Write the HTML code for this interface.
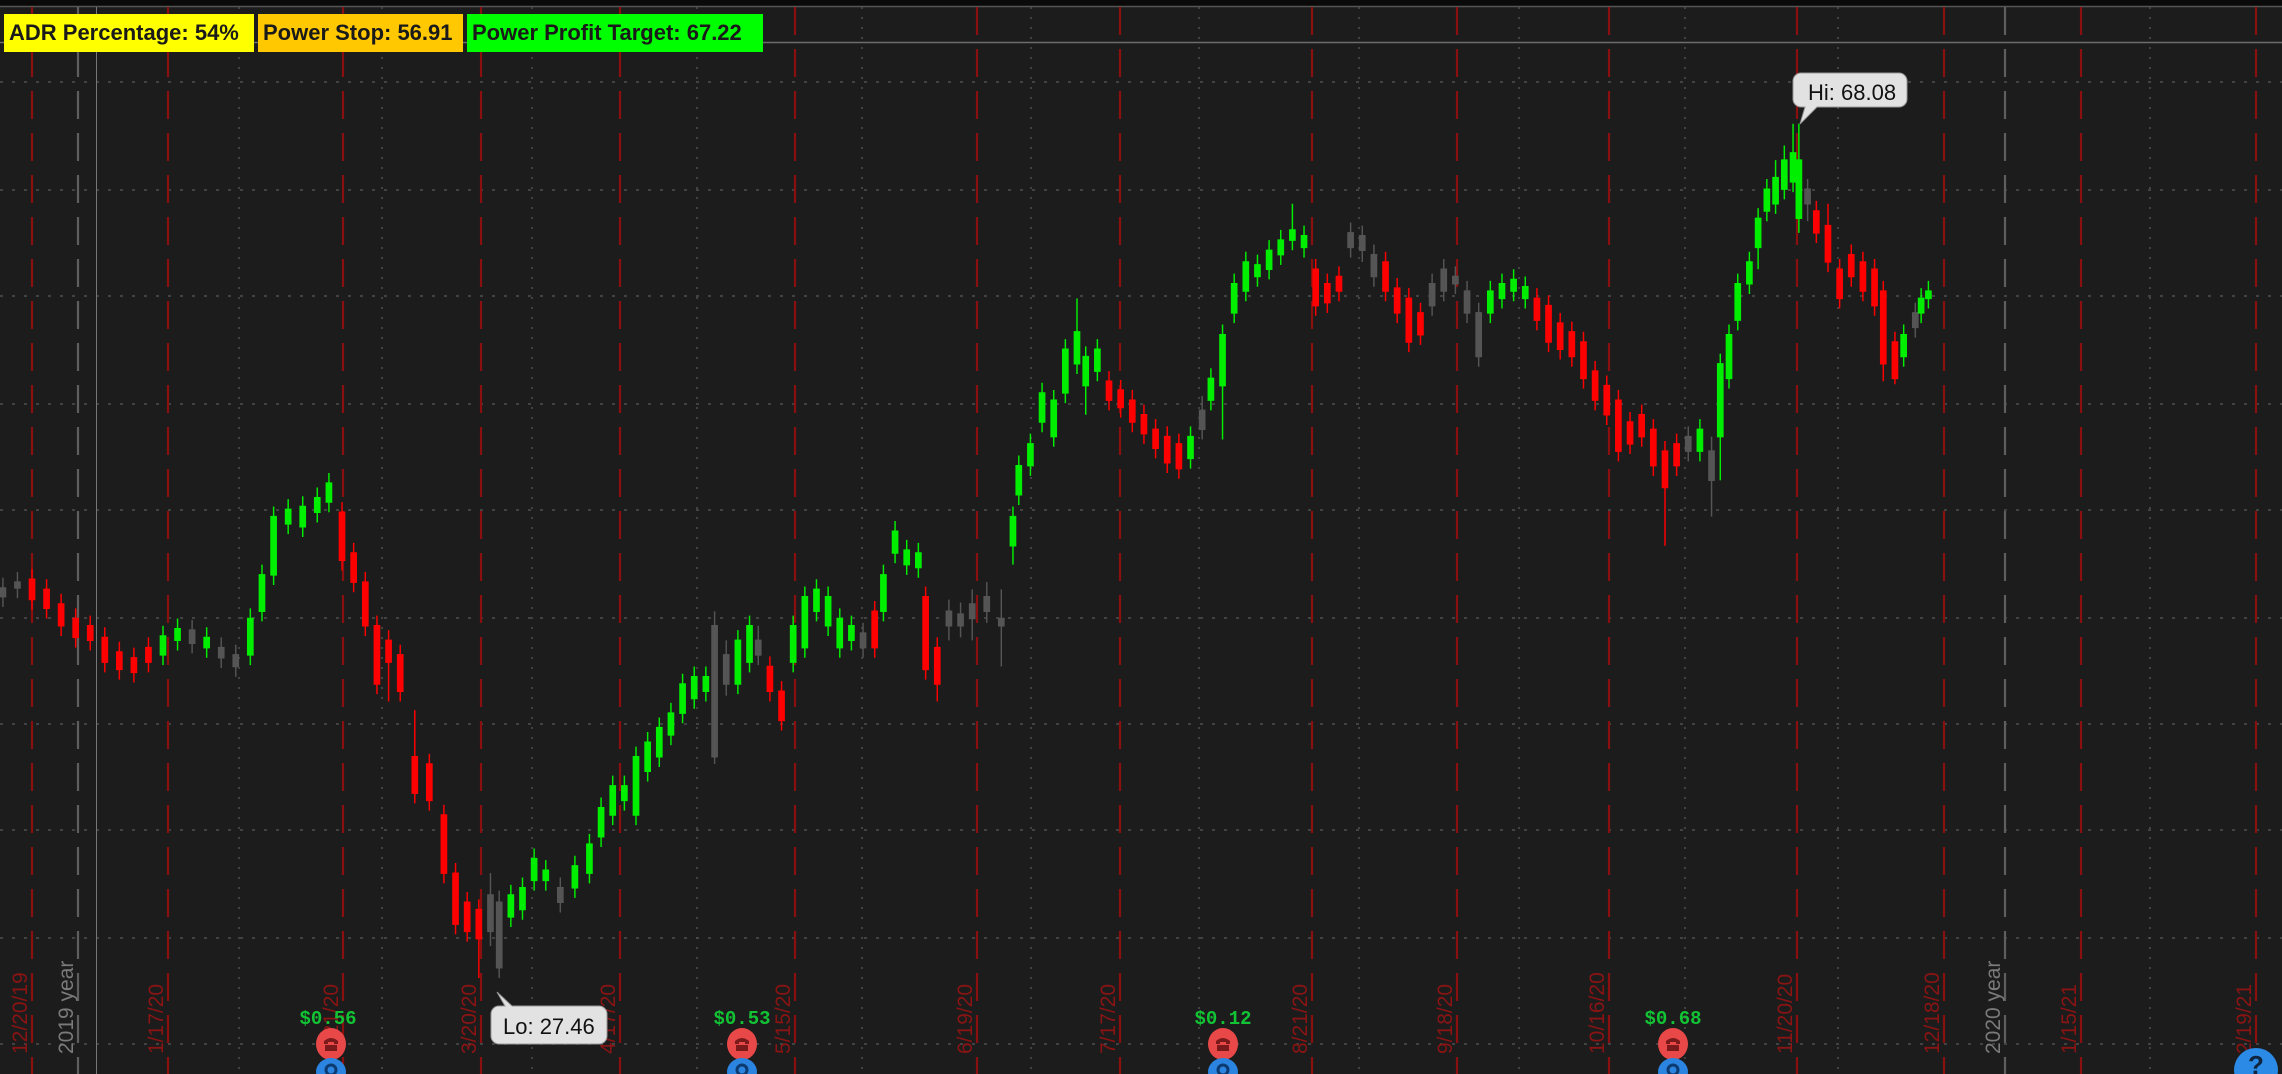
<!DOCTYPE html>
<html><head><meta charset="utf-8">
<style>
html,body{margin:0;padding:0;background:#1c1c1c;width:2282px;height:1074px;overflow:hidden;}
.box{position:absolute;top:14px;height:38px;font-family:"Liberation Sans",sans-serif;font-weight:bold;font-size:22px;line-height:38px;color:#1a1a1a;padding-left:5px;box-sizing:border-box;white-space:nowrap;}
svg{position:absolute;left:0;top:0;}
</style></head><body>
<svg width="2282" height="1074" viewBox="0 0 2282 1074" xmlns="http://www.w3.org/2000/svg">
<rect width="2282" height="1074" fill="#1c1c1c"/>
<rect width="2282" height="6" fill="#0a0a0a"/>
<line x1="0" y1="6.5" x2="2282" y2="6.5" stroke="#555" stroke-width="1.5"/>
<line x1="0" y1="42.5" x2="2282" y2="42.5" stroke="#6c6c6c" stroke-width="1.5"/>
<!-- horizontal dotted grid -->
<g stroke="#4e4e4e" stroke-width="1.5" stroke-dasharray="3 9">
<line x1="0" y1="82" x2="2282" y2="82"/><line x1="0" y1="190" x2="2282" y2="190"/>
<line x1="0" y1="296" x2="2282" y2="296"/><line x1="0" y1="404" x2="2282" y2="404"/>
<line x1="0" y1="510" x2="2282" y2="510"/><line x1="0" y1="618" x2="2282" y2="618"/>
<line x1="0" y1="724" x2="2282" y2="724"/><line x1="0" y1="830" x2="2282" y2="830"/>
<line x1="0" y1="938" x2="2282" y2="938"/><line x1="0" y1="1044" x2="2282" y2="1044"/>
</g>
<!-- vertical dotted grid -->
<g stroke="#4e4e4e" stroke-width="1.5" stroke-dasharray="2 8">
<line x1="239" y1="7" x2="239" y2="1074"/><line x1="382" y1="7" x2="382" y2="1074"/>
<line x1="532" y1="7" x2="532" y2="1074"/><line x1="697" y1="7" x2="697" y2="1074"/>
<line x1="862" y1="7" x2="862" y2="1074"/><line x1="1031" y1="7" x2="1031" y2="1074"/>
<line x1="1199" y1="7" x2="1199" y2="1074"/><line x1="1359" y1="7" x2="1359" y2="1074"/>
<line x1="1519" y1="7" x2="1519" y2="1074"/><line x1="1685" y1="7" x2="1685" y2="1074"/>
<line x1="1838" y1="7" x2="1838" y2="1074"/><line x1="2150" y1="7" x2="2150" y2="1074"/>
</g>
<line x1="96.5" y1="7" x2="96.5" y2="1074" stroke="#777" stroke-width="1"/>
<!-- red dashed date lines -->
<g stroke="#8a1010" stroke-width="2.2" stroke-dasharray="28 14">
<line x1="32" y1="7" x2="32" y2="1074"/><line x1="168" y1="7" x2="168" y2="1074"/>
<line x1="343" y1="7" x2="343" y2="1074"/><line x1="481" y1="7" x2="481" y2="1074"/>
<line x1="620" y1="7" x2="620" y2="1074"/><line x1="795" y1="7" x2="795" y2="1074"/>
<line x1="977" y1="7" x2="977" y2="1074"/><line x1="1120" y1="7" x2="1120" y2="1074"/>
<line x1="1312" y1="7" x2="1312" y2="1074"/><line x1="1457" y1="7" x2="1457" y2="1074"/>
<line x1="1609" y1="7" x2="1609" y2="1074"/><line x1="1797" y1="7" x2="1797" y2="1074"/>
<line x1="1944" y1="7" x2="1944" y2="1074"/><line x1="2081" y1="7" x2="2081" y2="1074"/>
<line x1="2256" y1="7" x2="2256" y2="1074"/>
</g>
<g stroke="#5e5e5e" stroke-width="2.2" stroke-dasharray="28 14">
<line x1="78" y1="7" x2="78" y2="1074"/><line x1="2005" y1="7" x2="2005" y2="1074"/>
</g>
<!-- candles -->
<g transform="scale(1.4554,1.4553)" stroke-width="1">
<path fill="#555" stroke="#555" d="M0.2 404h3.6V410h-3.6zM2 397V417M10.2 400h3.6V404h-3.6zM12 393V411M130.2 433h3.6V442h-3.6zM132 426V449M150.2 445h3.6V452h-3.6zM152 438V459M160.2 450h3.6V458h-3.6zM162 443V465M335.2 615h3.6V640h-3.6zM337 600V650M341.2 620h3.6V665h-3.6zM343 612V672M383.2 610h3.6V620h-3.6zM385 603V627M489.2 430h3.6V520h-3.6zM491 420V525M497.2 450h3.6V470h-3.6zM499 440V478M519.2 440h3.6V450h-3.6zM521 430V457M591.2 435h3.6V445h-3.6zM593 428V452M650.2 420h3.6V430h-3.6zM652 412V440M658.2 422h3.6V430h-3.6zM660 414V438M666.2 415h3.6V425h-3.6zM668 405V440M676.2 410h3.6V420h-3.6zM678 400V428M686.2 425h3.6V430h-3.6zM688 405V458M824.2 282h3.6V295h-3.6zM826 272V302M926.2 160h3.6V170h-3.6zM928 153V177M934.2 162h3.6V172h-3.6zM936 155V180M942.2 175h3.6V190h-3.6zM944 168V197M982.2 195h3.6V210h-3.6zM984 188V217M990.2 185h3.6V200h-3.6zM992 178V207M998.2 190h3.6V195h-3.6zM1000 183V202M1006.2 200h3.6V215h-3.6zM1008 193V222M1014.2 215h3.6V245h-3.6zM1016 208V252M1158.2 300h3.6V310h-3.6zM1160 293V317M1174.2 310h3.6V330h-3.6zM1176 300V355M1240.2 130h3.6V140h-3.6zM1242 123V152M1314.2 215h3.6V225h-3.6zM1316 208V232"/>
<path fill="#ff0000" stroke="#ff0000" d="M20.2 398h3.6V412h-3.6zM22 391V419M30.2 405h3.6V418h-3.6zM32 398V425M40.2 415h3.6V430h-3.6zM42 408V437M50.2 425h3.6V438h-3.6zM52 418V445M60.2 430h3.6V440h-3.6zM62 423V447M70.2 438h3.6V455h-3.6zM72 431V462M80.2 448h3.6V460h-3.6zM82 441V467M90.2 452h3.6V462h-3.6zM92 445V469M100.2 445h3.6V455h-3.6zM102 438V462M233.2 352h3.6V385h-3.6zM235 345V392M241.2 380h3.6V400h-3.6zM243 373V407M249.2 400h3.6V430h-3.6zM251 393V437M257.2 430h3.6V470h-3.6zM259 423V477M265.2 440h3.6V455h-3.6zM267 433V482M273.2 450h3.6V475h-3.6zM275 443V482M283.2 520h3.6V545h-3.6zM285 488V552M293.2 525h3.6V550h-3.6zM295 518V557M303.2 560h3.6V600h-3.6zM305 553V607M311.2 600h3.6V635h-3.6zM313 593V642M319.2 620h3.6V640h-3.6zM321 613V647M327.2 625h3.6V645h-3.6zM329 618V672M527.2 458h3.6V475h-3.6zM529 451V482M535.2 475h3.6V495h-3.6zM537 468V502M599.2 420h3.6V445h-3.6zM601 413V452M634.2 410h3.6V460h-3.6zM636 403V467M642.2 445h3.6V470h-3.6zM644 438V482M760.2 262h3.6V275h-3.6zM762 255V282M768.2 268h3.6V280h-3.6zM770 261V287M776.2 275h3.6V290h-3.6zM778 268V297M784.2 285h3.6V298h-3.6zM786 278V305M792.2 295h3.6V308h-3.6zM794 288V315M800.2 300h3.6V318h-3.6zM802 293V325M808.2 305h3.6V322h-3.6zM810 298V329M902.2 185h3.6V210h-3.6zM904 178V217M910.2 195h3.6V208h-3.6zM912 188V215M918.2 190h3.6V200h-3.6zM920 183V207M950.2 180h3.6V200h-3.6zM952 173V207M958.2 198h3.6V215h-3.6zM960 191V222M966.2 205h3.6V235h-3.6zM968 198V242M974.2 215h3.6V230h-3.6zM976 208V237M1054.2 205h3.6V220h-3.6zM1056 198V227M1062.2 210h3.6V235h-3.6zM1064 203V242M1070.2 222h3.6V240h-3.6zM1072 215V247M1078.2 228h3.6V245h-3.6zM1080 221V252M1086.2 235h3.6V260h-3.6zM1088 228V267M1094.2 255h3.6V275h-3.6zM1096 248V282M1102.2 265h3.6V285h-3.6zM1104 258V292M1110.2 275h3.6V310h-3.6zM1112 268V317M1118.2 290h3.6V305h-3.6zM1120 283V312M1126.2 285h3.6V300h-3.6zM1128 278V307M1134.2 295h3.6V320h-3.6zM1136 288V327M1142.2 310h3.6V335h-3.6zM1144 303V375M1150.2 305h3.6V320h-3.6zM1152 298V327M1246.2 145h3.6V160h-3.6zM1248 138V167M1254.2 155h3.6V180h-3.6zM1256 140V187M1262.2 185h3.6V205h-3.6zM1264 178V212M1270.2 175h3.6V190h-3.6zM1272 168V197M1278.2 180h3.6V200h-3.6zM1280 173V207M1286.2 185h3.6V210h-3.6zM1288 178V217M1292.2 200h3.6V250h-3.6zM1294 193V262M1300.2 235h3.6V260h-3.6zM1302 228V264"/>
<path fill="#00ee00" stroke="#00ee00" d="M110.2 437h3.6V450h-3.6zM112 430V457M120.2 432h3.6V440h-3.6zM122 425V447M140.2 438h3.6V445h-3.6zM142 431V452M170.2 425h3.6V450h-3.6zM172 418V457M178.2 395h3.6V420h-3.6zM180 388V427M186.2 355h3.6V395h-3.6zM188 348V402M196.2 350h3.6V360h-3.6zM198 343V367M206.2 348h3.6V362h-3.6zM208 341V369M216.2 342h3.6V352h-3.6zM218 335V359M224.2 332h3.6V345h-3.6zM226 325V352M349.2 615h3.6V630h-3.6zM351 608V637M357.2 610h3.6V625h-3.6zM359 603V632M365.2 590h3.6V605h-3.6zM367 583V612M373.2 598h3.6V605h-3.6zM375 591V612M393.2 595h3.6V610h-3.6zM395 588V617M403.2 580h3.6V600h-3.6zM405 573V607M411.2 555h3.6V575h-3.6zM413 548V582M419.2 540h3.6V560h-3.6zM421 533V567M427.2 540h3.6V550h-3.6zM429 533V557M435.2 520h3.6V560h-3.6zM437 513V567M443.2 510h3.6V530h-3.6zM445 503V537M451.2 500h3.6V520h-3.6zM453 493V527M459.2 490h3.6V505h-3.6zM461 483V512M467.2 470h3.6V490h-3.6zM469 463V497M475.2 465h3.6V480h-3.6zM477 458V487M483.2 465h3.6V475h-3.6zM485 458V482M505.2 440h3.6V470h-3.6zM507 433V477M513.2 430h3.6V455h-3.6zM515 423V462M543.2 430h3.6V455h-3.6zM545 423V462M551.2 410h3.6V445h-3.6zM553 403V452M559.2 405h3.6V420h-3.6zM561 398V427M567.2 410h3.6V430h-3.6zM569 403V437M575.2 425h3.6V445h-3.6zM577 418V452M583.2 430h3.6V440h-3.6zM585 423V447M605.2 395h3.6V420h-3.6zM607 388V427M613.2 365h3.6V380h-3.6zM615 358V387M621.2 378h3.6V388h-3.6zM623 371V395M629.2 380h3.6V390h-3.6zM631 373V397M694.2 355h3.6V375h-3.6zM696 348V388M698.2 320h3.6V340h-3.6zM700 313V347M706.2 305h3.6V320h-3.6zM708 298V327M714.2 270h3.6V290h-3.6zM716 263V297M722.2 275h3.6V300h-3.6zM724 268V307M730.2 240h3.6V270h-3.6zM732 233V277M738.2 228h3.6V250h-3.6zM740 205V257M744.2 245h3.6V265h-3.6zM746 238V285M752.2 240h3.6V255h-3.6zM754 233V262M816.2 300h3.6V315h-3.6zM818 293V322M830.2 260h3.6V275h-3.6zM832 253V282M838.2 230h3.6V265h-3.6zM840 223V302M846.2 195h3.6V215h-3.6zM848 188V222M854.2 180h3.6V200h-3.6zM856 173V207M862.2 182h3.6V190h-3.6zM864 175V197M870.2 172h3.6V185h-3.6zM872 165V192M878.2 165h3.6V175h-3.6zM880 158V182M886.2 158h3.6V165h-3.6zM888 140V172M894.2 162h3.6V170h-3.6zM896 155V177M1022.2 200h3.6V215h-3.6zM1024 193V222M1030.2 195h3.6V205h-3.6zM1032 188V212M1038.2 192h3.6V200h-3.6zM1040 185V207M1046.2 197h3.6V205h-3.6zM1048 190V212M1166.2 295h3.6V310h-3.6zM1168 288V317M1180.2 250h3.6V300h-3.6zM1182 243V330M1186.2 230h3.6V260h-3.6zM1188 223V267M1192.2 195h3.6V220h-3.6zM1194 188V227M1200.2 180h3.6V195h-3.6zM1202 173V202M1206.2 150h3.6V170h-3.6zM1208 143V185M1212.2 130h3.6V145h-3.6zM1214 123V152M1218.2 122h3.6V140h-3.6zM1220 110V147M1224.2 110h3.6V130h-3.6zM1226 100V137M1230.2 105h3.6V125h-3.6zM1232 85V132M1234.2 110h3.6V150h-3.6zM1236 85V160M1306.2 230h3.6V245h-3.6zM1308 223V252M1318.2 205h3.6V215h-3.6zM1320 198V222M1323.2 200h3.6V205h-3.6zM1325 193V212"/>
</g>
<!-- date labels -->
<g font-family="Liberation Sans, sans-serif" font-size="21" fill="#8a1414">
<text transform="translate(27,1054) rotate(-90)">12/20/19</text>
<text transform="translate(163,1054) rotate(-90)">1/17/20</text>
<text transform="translate(338,1054) rotate(-90)">2/21/20</text>
<text transform="translate(476,1054) rotate(-90)">3/20/20</text>
<text transform="translate(615,1054) rotate(-90)">4/17/20</text>
<text transform="translate(790,1054) rotate(-90)">5/15/20</text>
<text transform="translate(972,1054) rotate(-90)">6/19/20</text>
<text transform="translate(1115,1054) rotate(-90)">7/17/20</text>
<text transform="translate(1307,1054) rotate(-90)">8/21/20</text>
<text transform="translate(1452,1054) rotate(-90)">9/18/20</text>
<text transform="translate(1604,1054) rotate(-90)">10/16/20</text>
<text transform="translate(1792,1054) rotate(-90)">11/20/20</text>
<text transform="translate(1939,1054) rotate(-90)">12/18/20</text>
<text transform="translate(2076,1054) rotate(-90)">1/15/21</text>
<text transform="translate(2251,1054) rotate(-90)">2/19/21</text>
</g>
<g font-family="Liberation Sans, sans-serif" font-size="21" fill="#7a7a7a">
<text transform="translate(73,1054) rotate(-90)">2019 year</text>
<text transform="translate(2000,1054) rotate(-90)">2020 year</text>
</g>
<!-- dividends -->
<g font-family="Liberation Mono, monospace" font-weight="bold" font-size="19" fill="#12c434" text-anchor="middle">
<text x="328" y="1024">$0.56</text><text x="742" y="1024">$0.53</text>
<text x="1223" y="1024">$0.12</text><text x="1673" y="1024">$0.68</text>
</g>
<g>
<g transform="translate(331,1044)"><ellipse rx="15" ry="16" fill="#e84848"/><path d="M-7 -3q7-6 14 0v3h-4v-2h-6v2h-4zM-6 1h12v6h-12z" fill="#7a1a1a"/></g>
<g transform="translate(742,1044)"><ellipse rx="15" ry="16" fill="#e84848"/><path d="M-7 -3q7-6 14 0v3h-4v-2h-6v2h-4zM-6 1h12v6h-12z" fill="#7a1a1a"/></g>
<g transform="translate(1223,1044)"><ellipse rx="15" ry="16" fill="#e84848"/><path d="M-7 -3q7-6 14 0v3h-4v-2h-6v2h-4zM-6 1h12v6h-12z" fill="#7a1a1a"/></g>
<g transform="translate(1673,1044)"><ellipse rx="15" ry="16" fill="#e84848"/><path d="M-7 -3q7-6 14 0v3h-4v-2h-6v2h-4zM-6 1h12v6h-12z" fill="#7a1a1a"/></g>
<g fill="#2a84e0"><ellipse cx="331" cy="1072" rx="15" ry="14"/><ellipse cx="742" cy="1072" rx="15" ry="14"/><ellipse cx="1223" cy="1072" rx="15" ry="14"/><ellipse cx="1673" cy="1072" rx="15" ry="14"/></g>
<g fill="none" stroke="#0d3a70" stroke-width="3"><circle cx="331" cy="1070" r="5"/><circle cx="742" cy="1070" r="5"/><circle cx="1223" cy="1070" r="5"/><circle cx="1673" cy="1070" r="5"/></g>
</g>
<!-- bubbles -->
<path d="M1801 73h98a8 8 0 0 1 8 8v18a8 8 0 0 1-8 8h-82l-17 17 5-17h-4a8 8 0 0 1-8-8v-18a8 8 0 0 1 8-8z" fill="#e2e2e2" stroke="#999" stroke-width="1"/>
<text x="1808" y="100" font-family="Liberation Sans, sans-serif" font-size="22" fill="#111">Hi: 68.08</text>
<path d="M499 1006h6l-8-14 15 14h87a8 8 0 0 1 8 8v22a8 8 0 0 1-8 8h-100a8 8 0 0 1-8-8v-22a8 8 0 0 1 8-8z" fill="#e2e2e2" stroke="#999" stroke-width="1"/>
<text x="503" y="1034" font-family="Liberation Sans, sans-serif" font-size="22" fill="#111">Lo: 27.46</text>
<!-- help -->
<circle cx="2256" cy="1070" r="22" fill="#2b8ae6"/>
<text x="2256" y="1074" text-anchor="middle" font-family="Liberation Sans, sans-serif" font-weight="bold" font-size="26" fill="#10243e">?</text>
</svg>
<div class="box" style="left:4px;width:250px;background:#ffff00;">ADR Percentage: 54%</div>
<div class="box" style="left:258px;width:205px;background:#ffc800;">Power Stop: 56.91</div>
<div class="box" style="left:467px;width:296px;background:#00ff00;">Power Profit Target: 67.22</div>
</body></html>
